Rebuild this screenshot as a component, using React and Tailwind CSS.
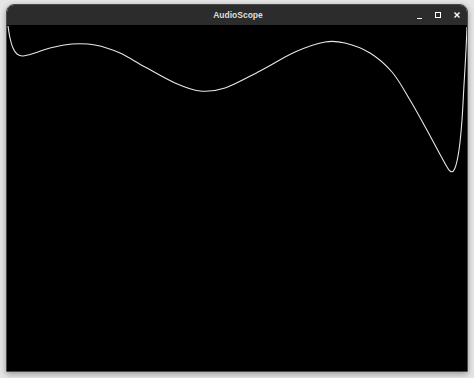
import React from "react";

// trace points, in content coordinates (content origin at page 7,25)
const PTS = [
  [8, 26], [10, 38], [13, 48], [17, 54], [23, 56], [35, 53], [50, 48], [72, 44],
  [95, 45], [120, 53], [145, 67], [175, 83], [200, 91], [225, 88], [260, 71],
  [295, 52], [325, 42], [345, 43], [370, 53], [392, 72], [410, 100], [428, 132],
  [442, 158], [450, 171], [455, 168], [459, 150], [462, 120], [464, 85], [466, 50], [467, 27],
].map(([x, y]) => [x - 7, y - 25]);

function splinePath(pts) {
  let d = `M${pts[0][0]},${pts[0][1]}`;
  for (let i = 0; i < pts.length - 1; i++) {
    const p0 = pts[i - 1] || pts[i];
    const p1 = pts[i];
    const p2 = pts[i + 1];
    const p3 = pts[i + 2] || p2;
    const c1 = [p1[0] + (p2[0] - p0[0]) / 6, p1[1] + (p2[1] - p0[1]) / 6];
    const c2 = [p2[0] - (p3[0] - p1[0]) / 6, p2[1] - (p3[1] - p1[1]) / 6];
    d += ` C${c1[0].toFixed(1)},${c1[1].toFixed(1)} ${c2[0].toFixed(1)},${c2[1].toFixed(1)} ${p2[0]},${p2[1]}`;
  }
  return d;
}

export default function App() {
  return (
    <div className="w-[474px] h-[378px] bg-[#e6e6e6] pt-[4px] pl-[6px]" style={{ fontFamily: '"Liberation Sans", Arial, sans-serif' }}>
      <div className="w-[462px] h-[368px] flex flex-col rounded-t-[8px] overflow-hidden border border-[#4a4a4a] shadow-[0_2px_6px_rgba(0,0,0,0.35)]">
        {/* Title bar */}
        <div className="relative h-[21px] bg-[#2c2c2c] flex items-center justify-center">
          <span className="text-[8.5px] font-bold text-[#dedede] ml-[2px]">AudioScope</span>
          <div className="absolute right-[5px] top-0 h-full flex items-center gap-[9px]">
            <div className="w-[10px] h-[10px] flex items-end justify-center pb-[1px]">
              <div className="w-[5px] h-[1.5px] bg-white" />
            </div>
            <div className="w-[10px] h-[10px] flex items-center justify-center">
              <div className="w-[6px] h-[6px] border-[1.5px] border-white" />
            </div>
            <div className="w-[10px] h-[10px] flex items-center justify-center">
              <svg width="8" height="8" viewBox="0 0 8 8">
                <path d="M1.5 1.5 L6.5 6.5 M6.5 1.5 L1.5 6.5" stroke="white" strokeWidth="1.4" />
              </svg>
            </div>
          </div>
        </div>
        {/* Scope */}
        <div className="flex-1 bg-black">
          <svg width="460" height="346" viewBox="0 0 460 346" className="block">
            <path d={splinePath(PTS)} fill="none" stroke="#e8e8e8" strokeWidth="1.1" />
          </svg>
        </div>
      </div>
    </div>
  );
}
